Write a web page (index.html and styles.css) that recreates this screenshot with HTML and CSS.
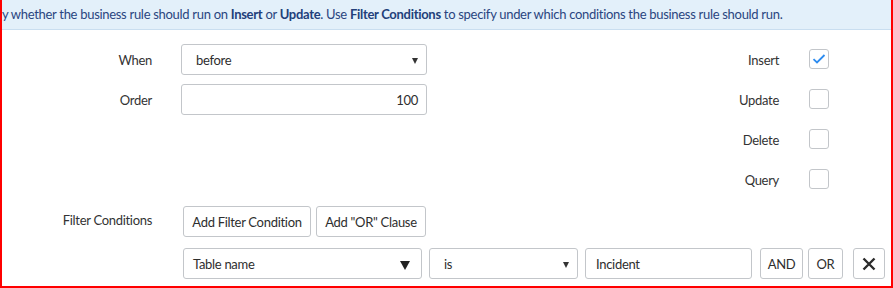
FILE: index.html
```html
<!DOCTYPE html>
<html>
<head>
<meta charset="utf-8">
<link rel="stylesheet" href="styles.css">
</head>
<body>
<div class="frame">
  <div class="banner">y whether the business rule should run on <b>Insert</b> or <b>Update</b>. Use <b>Filter Conditions</b> to specify under which conditions the business rule should run.</div>
  <div class="form">
    <div class="top">
      <div class="left">
        <div class="row">
          <div class="label">When</div>
          <div class="control select"><span class="val">before</span><span class="arrow-sm"></span></div>
        </div>
        <div class="row">
          <div class="label">Order</div>
          <div class="control input right"><span class="val">100</span></div>
        </div>
      </div>
      <div class="right-col">
        <div class="crow"><span class="clabel">Insert</span><span class="cb checked"><svg width="14" height="12" viewBox="0 0 14 12"><path d="M1.5 6.2 L5 9.5 L12.5 2" fill="none" stroke="#2d8cf0" stroke-width="1.8"/></svg></span></div>
        <div class="crow"><span class="clabel">Update</span><span class="cb"></span></div>
        <div class="crow"><span class="clabel">Delete</span><span class="cb"></span></div>
        <div class="crow"><span class="clabel">Query</span><span class="cb"></span></div>
      </div>
    </div>
    <div class="filter">
      <div class="row frow">
        <div class="label flabel">Filter Conditions</div>
        <div class="btns">
          <button class="btn b-add">Add Filter Condition</button>
          <button class="btn b-or">Add "OR" Clause</button>
        </div>
      </div>
      <div class="row crow2">
        <div class="label"></div>
        <div class="cond">
          <div class="control select tname"><span class="val">Table name</span><span class="arrow-lg"></span></div>
          <div class="control select isbox"><span class="val">is</span><span class="arrow-sm"></span></div>
          <div class="control input inc"><span class="val">Incident</span></div>
          <button class="btn b-and">AND</button>
          <button class="btn b-or2">OR</button>
          <button class="btn b-x"><svg width="14" height="14" viewBox="0 0 14 14"><path d="M1.5 1.5 L12.5 12.5 M12.5 1.5 L1.5 12.5" stroke="#2b2b2b" stroke-width="2.4" fill="none"/></svg></button>
        </div>
      </div>
    </div>
  </div>
</div>
</body>
</html>
```
FILE: styles.css
```css
* { box-sizing: border-box; }
html, body { margin: 0; padding: 0; background: #fff; }
body {
  font-family: "Lato", "Noto Sans", sans-serif;
  font-size: 13px;
  letter-spacing: -0.3px;
  color: #2e2e2e;
  width: 893px;
  height: 288px;
  overflow: hidden;
}
.frame {
  width: 893px;
  height: 288px;
  border-left: 2px solid #ff0000;
  border-right: 2px solid #ff0000;
  border-bottom: 2px solid #ff0000;
}
.banner {
  height: 30px;
  background: #e3f0fa;
  border-bottom: 1px solid #c9def0;
  color: #2a4580;
  line-height: 28px;
  white-space: nowrap;
  overflow: hidden;
  padding-left: 0;
}
.banner b { font-weight: 700; color: #22407a; }
.form { padding-top: 14px; }
.top { display: flex; }
.left { width: 425px; }
.row { display: flex; align-items: center; height: 31px; margin-bottom: 9px; }
.label { width: 150px; text-align: right; color: #333; }
.control {
  margin-left: 29px;
  width: 246px;
  height: 31px;
  border: 1px solid #c3c6ca;
  border-radius: 3px;
  display: flex;
  align-items: center;
  position: relative;
  background: #fff;
}
.select .val { padding-left: 14px; }
.right .val { margin-left: auto; padding-right: 8px; }
.arrow-sm {
  position: absolute;
  right: 8px;
  top: 13px;
  width: 0; height: 0;
  border-left: 3px solid transparent;
  border-right: 3px solid transparent;
  border-top: 6px solid #333;
}
.arrow-lg {
  position: absolute;
  right: 11px;
  top: 12px;
  width: 0; height: 0;
  border-left: 5px solid transparent;
  border-right: 5px solid transparent;
  border-top: 9px solid #222;
}
.right-col { flex: 1; padding-right: 62px; }
.crow {
  display: flex;
  justify-content: flex-end;
  align-items: center;
  height: 31px;
  margin-bottom: 9px;
}
.clabel { color: #333; margin-right: 30px; }
.cb {
  width: 20px; height: 20px;
  border: 1px solid #c3c6ca;
  border-radius: 3px;
  display: flex; align-items: center; justify-content: center;
  margin-top: -2px;
}
.filter { margin-top: 2px; }
.frow { margin-bottom: 11px; }
.flabel { align-self: flex-start; padding-top: 6px; }
.btns { display: flex; gap: 5px; margin-left: 31px; }
.btn {
  font-family: inherit;
  font-size: 13px;
  letter-spacing: -0.3px;
  white-space: nowrap;
  color: #2e2e2e;
  background: #fff;
  border: 1px solid #c3c6ca;
  border-radius: 3px;
  height: 31px;
  padding: 0;
  display: flex; align-items: center; justify-content: center;
}
.b-add { width: 128px; }
.b-or { width: 110px; }
.cond { display: flex; margin-left: 31px; align-items: center; }
.cond .control { margin-left: 0; }
.tname { width: 239px; }
.tname .val { padding-left: 9px; }
.isbox { width: 149px; margin-left: 7px !important; }
.inc { width: 167px; margin-left: 7px !important; }
.inc .val { padding-left: 10px; }
.b-and { width: 43px; margin-left: 8px; }
.b-or2 { width: 35px; margin-left: 5px; }
.b-x { width: 32px; margin-left: 10px; }
```
